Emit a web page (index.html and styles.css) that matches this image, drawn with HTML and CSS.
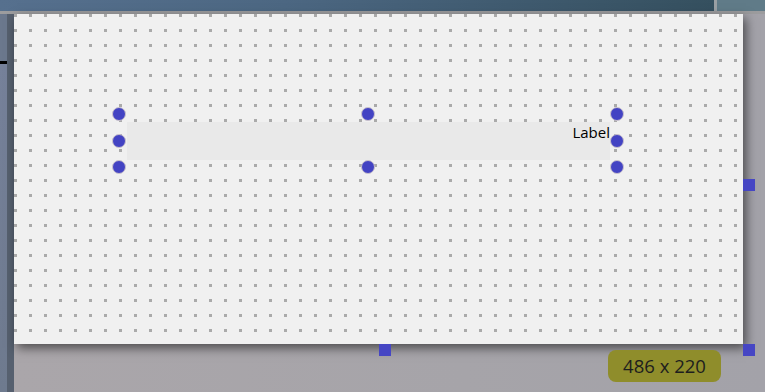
FILE: index.html
```html
<!DOCTYPE html>
<html>
<head>
<meta charset="utf-8">
<link rel="stylesheet" href="styles.css">
</head>
<body>
<div class="app">
  <div class="topbar">
    <div class="tb-main"></div>
    <div class="tb-sep"></div>
    <div class="tb-right"></div>
  </div>
  <div class="rule"></div>
  <div class="body">
    <div class="side">
      <div class="side-a"><span class="mark"></span></div>
      <div class="side-b"></div>
    </div>
    <div class="workspace">
      <div class="form">
        <div class="label">Label</div>
        <div class="selection">
          <span class="handle h-tl"></span>
          <span class="handle h-ml"></span>
          <span class="handle h-bl"></span>
          <span class="handle h-tc"></span>
          <span class="handle h-bc"></span>
          <span class="handle h-tr"></span>
          <span class="handle h-mr"></span>
          <span class="handle h-br"></span>
        </div>
        <span class="grip grip-r"></span>
        <span class="grip grip-b"></span>
        <span class="grip grip-br"></span>
      </div>
      <div class="size-badge">486 x 220</div>
    </div>
  </div>
</div>
</body>
</html>
```

FILE: styles.css
```css
html, body {
  margin: 0;
  padding: 0;
}
body {
  width: 765px;
  height: 392px;
  overflow: hidden;
  font-family: "Open Sans", "Noto Sans", sans-serif;
  background: #a8a5aa;
}
.app {
  display: flex;
  flex-direction: column;
  width: 765px;
  height: 392px;
}
.topbar {
  display: flex;
  height: 11px;
}
.tb-main {
  flex: 1;
  background: linear-gradient(90deg, #56708e 0%, #4c6782 40%, #35505f 100%);
}
.tb-sep {
  width: 3px;
  background: #9aa0a4;
}
.tb-right {
  width: 48px;
  background: #607b88;
}
.rule {
  height: 3px;
  background: #9c9c9e;
}
.body {
  flex: 1;
  display: flex;
}
.side {
  display: flex;
  width: 14px;
}
.side-a {
  width: 7px;
  background: linear-gradient(180deg, #6b788d 0, #6b788d 50px, #76819a 50px, #6e7a8e 100%);
  display: flex;
  flex-direction: column;
}
.mark {
  display: block;
  margin-top: 47px;
  height: 3px;
  background: #000;
}
.side-b {
  width: 7px;
  background: #56606f;
}
.workspace {
  flex: 1;
  position: relative;
  background: linear-gradient(90deg, #aaa6aa 0%, #a6a4a9 60%, #a3a2a9 100%);
}
.form {
  position: relative;
  width: 729px;
  height: 330px;
  background-color: #aaaaaa;
  background-image:
    linear-gradient(90deg, transparent 3px, #f0f0f0 3px),
    linear-gradient(180deg, transparent 3px, #f0f0f0 3px);
  background-size: 15px 15px;
  background-position: 0 0;
  box-shadow: 3px 4px 10px rgba(0, 0, 0, 0.55);
}
.label {
  position: absolute;
  left: 113px;
  top: 108px;
  width: 483px;
  height: 38px;
  background: #e9e9e9;
  color: #000;
  font-size: 15px;
  line-height: 20px;
  text-align: right;
}
.selection {
  position: absolute;
  left: 105px;
  top: 100px;
  width: 498px;
  height: 53px;
}
.handle {
  position: absolute;
  width: 12px;
  height: 12px;
  margin: -7px 0 0 -7px;
  border-radius: 50%;
  background: #4343c3;
  border: 1px solid #c9c2cc;
}
.h-tl { left: 0; top: 0; }
.h-ml { left: 0; top: 50%; }
.h-bl { left: 0; top: 100%; }
.h-tc { left: 50%; top: 0; }
.h-bc { left: 50%; top: 100%; }
.h-tr { left: 100%; top: 0; }
.h-mr { left: 100%; top: 50%; }
.h-br { left: 100%; top: 100%; }
.grip {
  position: absolute;
  width: 12px;
  height: 12px;
  background: #4646c4;
}
.grip-r { left: 100%; top: 50%; }
.grip-b { left: 50%; top: 100%; }
.grip-br { left: 100%; top: 100%; }
.size-badge {
  position: absolute;
  left: 594px;
  top: 336px;
  width: 113px;
  height: 32px;
  border-radius: 8px;
  background: #8f8d2b;
  color: #1e1e1e;
  font-size: 18.5px;
  line-height: 32px;
  text-align: center;
}
```
